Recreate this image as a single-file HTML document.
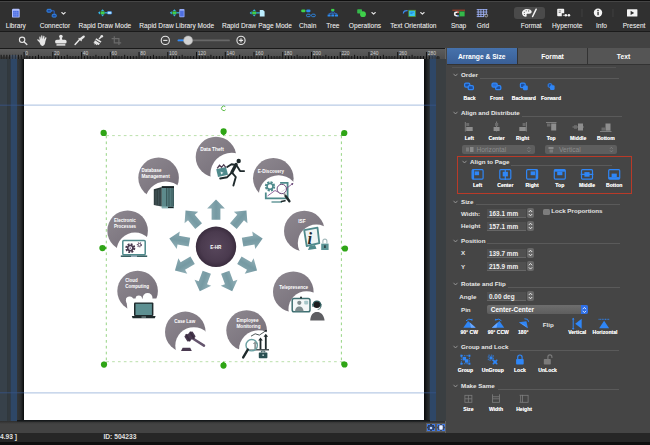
<!DOCTYPE html>
<html><head><meta charset="utf-8">
<style>
*{box-sizing:border-box;margin:0;padding:0}
html,body{width:650px;height:445px;overflow:hidden;background:#0e0e0e;font-family:"Liberation Sans",sans-serif;}
#root{position:relative;width:650px;height:445px;overflow:hidden;background:#0e0e0e}
.abs{position:absolute}
svg{position:absolute;left:0;top:0;overflow:visible}
.tl{position:absolute;top:21.600px;font-size:6.600px;color:#d6d6d6;text-shadow:0 0 .2px #aaa;white-space:nowrap;transform:translateX(-50%);line-height:8px;}
#tb1{left:0;top:1.300px;width:650px;height:29.700px;background:#303030;border-top:.8px solid #454545}
#tb2{left:0;top:31px;width:650px;height:18.200px;background:#424242;border-top:1px solid #1b1b1b;border-bottom:.8px solid #1a1a1a}
#ruler{left:0;top:49.200px;width:445px;height:9.800px;background:linear-gradient(#5c5c5c,#4c4c4c)}
#canvas{left:0;top:59px;width:446px;height:362px;background:#2b3236}
#page{left:24px;top:59px;width:400px;height:361px;background:#fff}
#panel{left:444.700px;top:48px;width:206px;height:384.700px;background:#454545;border-left:1.300px solid #646464}
#hbar{left:0;top:421px;width:445px;height:11.700px;background:linear-gradient(#2e2e2e,#434343 25%,#434343)}
#status{left:0;top:432.700px;width:650px;height:9.300px;background:#262626}
.sl{position:absolute;font-size:6.700px;color:#e0e0e0;font-weight:bold;white-space:nowrap;line-height:8px}
/* panel */
.tab{position:absolute;top:48px;height:16px;font-size:6.7px;font-weight:bold;color:#fff;text-align:center;line-height:17.400px;background:#555;border-right:1px solid #333}
.hd{position:absolute;font-size:6.2px;font-weight:bold;color:#e8e8e8;white-space:nowrap;line-height:8px}
.ln{position:absolute;height:1px;background:#5a5a5a}
.il{position:absolute;font-size:5.100px;font-weight:bold;color:#f2f2f2;text-shadow:0 0 .35px #e8e8e8;white-space:nowrap;transform:translateX(-50%);line-height:7px}
.lb{position:absolute;font-size:6.2px;font-weight:bold;color:#e6e6e6;white-space:nowrap;line-height:8px}
.inp{position:absolute;left:487px;width:39px;height:9px;background:#505050;border-bottom:1px solid #666;font-size:6.400px;font-weight:bold;color:#f0f0f0;line-height:9px;padding-left:2px;white-space:nowrap}
.stp{position:absolute;left:527px;width:7px;height:10px;background:#686868;border-radius:2px}
.chev{position:absolute;width:5px;height:4px}
</style></head><body>
<div id="root">
<div id="tb1" class="abs"></div>
<div id="tb2" class="abs"></div>
<div id="ruler" class="abs"></div>
<div id="canvas" class="abs"></div>
<div id="page" class="abs"></div>
<div id="panel" class="abs"></div>
<div id="hbar" class="abs"></div>
<div id="status" class="abs"></div>

<!--toolbar-->
<div class="abs" style="left:514px;top:7px;width:31px;height:12px;border-radius:3px;background:#4a4a4a"></div>
<div class="tl" style="left:15.8px">Library</div>
<div class="tl" style="left:54.9px">Connector</div>
<div class="tl" style="left:104.9px">Rapid Draw Mode</div>
<div class="tl" style="left:176.7px">Rapid Draw Library Mode</div>
<div class="tl" style="left:256.9px">Rapid Draw Page Mode</div>
<div class="tl" style="left:307.7px">Chain</div>
<div class="tl" style="left:332.9px">Tree</div>
<div class="tl" style="left:365px">Operations</div>
<div class="tl" style="left:413.4px">Text Orientation</div>
<div class="tl" style="left:458.6px">Snap</div>
<div class="tl" style="left:483px">Grid</div>
<div class="tl" style="left:531.2px">Format</div>
<div class="tl" style="left:567.3px">Hypernote</div>
<div class="tl" style="left:601.4px">Info</div>
<div class="tl" style="left:634.1px">Present</div>
<svg width="650" height="60" viewBox="0 0 650 60"><rect x="12" y="8.700" width="7.700" height="8.900" rx="1.200" fill="#b2c0ff"/><rect x="13.100" y="10.800" width="5.500" height="5.900" fill="#4468e2"/><path d="M13.100 12.800h5.500M13.100 14.800h5.500M14.900 10.800v5.900M16.700 10.800v5.900" stroke="#8aa0f4" stroke-width="0.5"/><path d="M51.300 10.800 H54.200 V14.200" fill="none" stroke="#2a62c8" stroke-width="1"/><rect x="47" y="9.300" width="4.200" height="2.900" rx="0.700" fill="#1a4aa0" stroke="#3a98ff" stroke-width="0.800"/><rect x="52.200" y="14.300" width="4" height="2.800" rx="0.700" fill="#1a4aa0" stroke="#3a98ff" stroke-width="0.800"/><path d="M61.8 12.5 L63.5 14.1 L65.2 12.5" fill="none" stroke="#e0e0e0" stroke-width="1.100" stroke-linecap="round" stroke-linejoin="round"/><path d="M98.0 12.8 L100.0 11.200000000000001 V14.4Z M102.6 9.200000000000001 L101.0 11.0 H104.19999999999999Z M102.6 16.400000000000002 L101.0 14.600000000000001 H104.19999999999999Z" fill="#35b6e8"/><rect x="100.6" y="11.4" width="4" height="2.8" fill="#3fd04a"/><path d="M104.6 12.8H107.5" stroke="#35b6e8" stroke-width="1.2"/><rect x="107.4" y="11.6" width="4.2" height="2.5" rx="0.6" fill="#bfe6ff" stroke="#2d8cf0" stroke-width="0.6"/><path d="M169.8 12.8 L171.8 11.200000000000001 V14.4Z M174.4 9.200000000000001 L172.8 11.0 H176.0Z M174.4 16.400000000000002 L172.8 14.600000000000001 H176.0Z" fill="#35b6e8"/><rect x="172.4" y="11.4" width="4" height="2.8" fill="#3fd04a"/><path d="M176.4 12.8H179.5" stroke="#35b6e8" stroke-width="1.2"/><rect x="179.3" y="8.9" width="5.2" height="8.3" rx="0.8" fill="#93a9f6"/><rect x="180.1" y="10.8" width="3.6" height="5.6" fill="#4f6fe0"/><path d="M249.6 12.9 L251.6 11.3 V14.5Z M254.2 9.3 L252.6 11.1 H255.79999999999998Z M254.2 16.5 L252.6 14.700000000000001 H255.79999999999998Z" fill="#35b6e8"/><rect x="252.2" y="11.5" width="4" height="2.8" fill="#3fd04a"/><path d="M256.2 12.9H259.8" stroke="#35b6e8" stroke-width="1.2"/><path d="M259.8 10h3.2l1.6 1.6v5h-4.8z" fill="#bdeeff"/><rect x="301.200" y="9.400" width="4.300" height="2.800" rx="1.200" fill="#3fd04a"/><rect x="306.200" y="9.400" width="4.300" height="2.800" rx="1.200" fill="#2d8cf0"/><rect x="306.500" y="14.200" width="3.800" height="2.500" rx="1.100" fill="none" stroke="#2d8cf0" stroke-width=".9"/><rect x="311.500" y="14.200" width="3.800" height="2.500" rx="1.100" fill="none" stroke="#2d8cf0" stroke-width=".9"/><path d="M332.8 11 L329 14.5 M332.8 11 L336.8 14.5 M332.8 11V14.5 M328.6 13.6H337.2" stroke="#2d6fd0" stroke-width="0.7" fill="none"/><rect x="331.2" y="8.9" width="3.1" height="2.3" fill="#3fd04a"/><rect x="327.6" y="14.4" width="3" height="2.2" rx="0.4" fill="#2d8cf0"/><rect x="331.3" y="14.4" width="3" height="2.2" rx="0.4" fill="#2d8cf0"/><rect x="335" y="14.4" width="3" height="2.2" rx="0.4" fill="#2d8cf0"/><rect x="357.200" y="9.300" width="4.800" height="4.200" rx="0.800" fill="#35b84a"/><circle cx="363" cy="14.200" r="2.900" fill="#3fd04a"/><path d="M371.90000000000003 12.5 L373.6 14.1 L375.3 12.5" fill="none" stroke="#e0e0e0" stroke-width="1.100" stroke-linecap="round" stroke-linejoin="round"/><path d="M403.4 13.6 C403.4 11.2 405 10.4 407.6 10.6" fill="none" stroke="#3a8af0" stroke-width="1.2"/><rect x="408.8" y="10.3" width="6.5" height="6.2" fill="#38c6f4" stroke="#5a9a2a" stroke-width="0.8"/><path d="M410.3 12.2h3.6M410.3 13.6h2.2" stroke="#1f6fd0" stroke-width="0.7"/><path d="M420.7 12.5 L422.4 14.1 L424.09999999999997 12.5" fill="none" stroke="#e0e0e0" stroke-width="1.100" stroke-linecap="round" stroke-linejoin="round"/><path d="M452.3 10.2H465" stroke="#d8482a" stroke-width="0.8"/><path d="M458.6 11.6h-2.4a2.4 2.4 0 0 0 0 4.8h2.4v-1.5h-2.2a0.9 0.9 0 0 1 0-1.8h2.2z" fill="#f4f4f4"/><rect x="457.4" y="11.6" width="1.3" height="1.5" fill="#e04a30"/><rect x="457.4" y="14.9" width="1.3" height="1.5" fill="#3a7ae0"/><rect x="459.6" y="11.6" width="5" height="4.6" fill="#35b84a" stroke="#2a8a3a" stroke-width="0.5"/><path d="M476.7 9.6H487.4M476.7 12H487.4M476.7 14.4H487.4M476.7 16.6H484M478.2 9.2V17M480.9 9.2V17M483.6 9.2V17M486.3 9.2V15" stroke="#9db0f6" stroke-width="0.9" fill="none"/><circle cx="486.2" cy="15.6" r="1.4" fill="#303030" stroke="#ddd" stroke-width="0.6"/><path d="M527 9c-2.800 0-5 1.900-5 4.100 0 2.100 1.700 3.700 3.700 3.700 1.100 0 1.200-.9 .9-1.500-.4-.8 .2-1.500 1.100-1.500h1.600c1.400 0 2.400-.9 2.400-2 0-1.700-2-2.800-4.700-2.800z" fill="#f4f4f4"/><circle cx="524.300" cy="12.300" r=".55" fill="#444"/><circle cx="526.200" cy="10.700" r=".55" fill="#444"/><circle cx="528.700" cy="10.900" r=".55" fill="#444"/><circle cx="524.400" cy="14.500" r=".55" fill="#444"/><path d="M536.200 9.200 L532.600 16.500" stroke="#f4f4f4" stroke-width="1.500" stroke-linecap="round"/><path d="M557.200 9.600a.8 .8 0 0 1 .8-.8h5.400a.8 .8 0 0 1 .8 .8v3.600h-2.400v3h-3.800a.8 .8 0 0 1-.8-.8z" fill="#f4f4f4"/><path d="M558.700 10.900h2.400M558.700 12.500h2" stroke="#555" stroke-width=".7"/><circle cx="565.800" cy="15.300" r="1.300" fill="#f4f4f4"/><circle cx="568.900" cy="15.300" r="1.300" fill="#f4f4f4"/><path d="M562.800 15.300h1.700" stroke="#f4f4f4" stroke-width=".7"/><path d="M582 9V17M613 9V17" stroke="#454545" stroke-width="0.8"/><circle cx="598" cy="12.8" r="4.2" fill="#f4f4f4"/><rect x="597.4" y="12" width="1.3" height="3.2" fill="#2b2b2b"/><circle cx="598" cy="10.6" r=".8" fill="#2b2b2b"/><rect x="627" y="9.2" width="10.4" height="7.4" rx="0.6" fill="#f4f4f4"/><path d="M630.6 10.8v4.2l3.6-2.100z" fill="#2b2b2b"/><circle cx="22.1" cy="39.8" r="2.7" fill="none" stroke="#e6e6e6" stroke-width="1.1"/><path d="M24.2 42 L26.9 44.4" stroke="#e6e6e6" stroke-width="1.4" stroke-linecap="round"/><path d="M39.6 42.6 L37.4 40.2 C36.9 39.5 37.7 38.8 38.4 39.4 L39.6 40.5 L39.3 37.1 C39.2 36.3 40.3 36.1 40.5 36.9 L41 39.3 L41.2 35.9 C41.2 35.1 42.4 35.1 42.4 35.9 L42.6 39.2 L43.3 36.3 C43.5 35.5 44.6 35.8 44.5 36.6 L44.1 39.6 L45.3 37.6 C45.7 36.9 46.7 37.4 46.4 38.2 L45.4 41.2 C45.2 43.8 44.4 45.9 42.4 45.9 C41 45.9 40.2 44.6 39.6 42.6Z" fill="#e6e6e6"/><circle cx="60.9" cy="36.5" r="1.8" fill="#e6e6e6"/><path d="M60 37.5h1.800l.5 2.400h-2.800z" fill="#e6e6e6"/><rect x="55.100" y="39.700" width="11.500" height="3.900" rx="1.700" fill="#e6e6e6"/><rect x="56.400" y="44.100" width="9" height="1.700" rx=".5" fill="#cfcfcf"/><path d="M75.100 44.500L79.800 39.300" stroke="#e6e6e6" stroke-width="1.500" stroke-linecap="round"/><path d="M79 38.400l2.300 2.300" stroke="#e6e6e6" stroke-width="1.200" stroke-linecap="round"/><path d="M80.800 39L83.700 36.600" stroke="#e6e6e6" stroke-width="2.300" stroke-linecap="round"/><circle cx="101.800" cy="36.300" r="1.300" fill="#e6e6e6"/><path d="M101.300 36.800L99 39" stroke="#e6e6e6" stroke-width="1.500"/><path d="M96.300 38.200l5.200 3.300-1 1.300-5.200-3.300z" fill="#e6e6e6"/><path d="M95 40.200l5 3.200c-1 1.300-1.500 1.800-2 1.700l-.4-1-.6 1.200-1-.5.200-1.200-1 1-1-.4.500-1.500-1.500.5c.6-.8 1.300-1.800 1.800-3z" fill="#e6e6e6"/><path d="M114.300 36.200V42.900H121.200M111.600 38.600H118.900V44.900" fill="none" stroke="#6a6a6a" stroke-width="1.200"/><circle cx="165.300" cy="40.400" r="4.100" fill="none" stroke="#e6e6e6" stroke-width="1.100"/><path d="M163.200 40.400h4.200" stroke="#e6e6e6" stroke-width="1.100"/><path d="M178.500 40.400H229" stroke="#686868" stroke-width="1.800" stroke-linecap="round"/><path d="M178.500 40.400H186" stroke="#2f8cff" stroke-width="1.800" stroke-linecap="round"/><circle cx="188.100" cy="40.400" r="4.500" fill="#d2d2d2"/><circle cx="188.100" cy="40.400" r="4.500" fill="none" stroke="#a8a8a8" stroke-width=".5"/><circle cx="241" cy="40.400" r="4.100" fill="none" stroke="#e6e6e6" stroke-width="1.100"/><path d="M238.900 40.400h4.200M241 38.300v4.200" stroke="#e6e6e6" stroke-width="1.100"/></svg>

<!--canvas-->
<svg width="650" height="445" viewBox="0 0 650 445"><defs>
<linearGradient id="dg" x1="0.1" y1="0" x2="0.9" y2="1"><stop offset="0" stop-color="#8d878f"/><stop offset="1" stop-color="#746d77"/></linearGradient>
<radialGradient id="cg" cx="0.5" cy="0.5" r="0.5"><stop offset="0" stop-color="#58475c"/><stop offset="0.75" stop-color="#4a3a4e"/><stop offset="1" stop-color="#3a2c3e"/></radialGradient>
<linearGradient id="ag" x1="0" y1="0" x2="1" y2="0"><stop offset="0" stop-color="#94b2b9"/><stop offset="0.5" stop-color="#769aa3"/><stop offset="1" stop-color="#8aaab2"/></linearGradient>
</defs><path d="M1.11 54.8V59M3.98 54.8V59M6.86 54.8V59M9.73 54.8V59M12.60 54.8V59M15.48 54.8V59M18.35 54.8V59M21.23 54.8V59M24.10 52V59M26.97 56V59M29.85 56V59M32.72 56V59M35.60 56V59M38.47 54.8V59M41.34 56V59M44.22 56V59M47.09 56V59M49.97 56V59M52.84 52V59M55.71 56V59M58.59 56V59M61.46 56V59M64.34 56V59M67.21 54.8V59M70.08 56V59M72.96 56V59M75.83 56V59M78.71 56V59M81.58 52V59M84.45 56V59M87.33 56V59M90.20 56V59M93.08 56V59M95.95 54.8V59M98.82 56V59M101.70 56V59M104.57 56V59M107.45 56V59M110.32 52V59M113.19 56V59M116.07 56V59M118.94 56V59M121.82 56V59M124.69 54.8V59M127.56 56V59M130.44 56V59M133.31 56V59M136.19 56V59M139.06 52V59M141.93 56V59M144.81 56V59M147.68 56V59M150.56 56V59M153.43 54.8V59M156.30 56V59M159.18 56V59M162.05 56V59M164.93 56V59M167.80 52V59M170.67 56V59M173.55 56V59M176.42 56V59M179.30 56V59M182.17 54.8V59M185.04 56V59M187.92 56V59M190.79 56V59M193.67 56V59M196.54 52V59M199.41 56V59M202.29 56V59M205.16 56V59M208.04 56V59M210.91 54.8V59M213.78 56V59M216.66 56V59M219.53 56V59M222.41 56V59M225.28 52V59M228.15 56V59M231.03 56V59M233.90 56V59M236.78 56V59M239.65 54.8V59M242.52 56V59M245.40 56V59M248.27 56V59M251.15 56V59M254.02 52V59M256.89 56V59M259.77 56V59M262.64 56V59M265.52 56V59M268.39 54.8V59M271.26 56V59M274.14 56V59M277.01 56V59M279.89 56V59M282.76 52V59M285.63 56V59M288.51 56V59M291.38 56V59M294.26 56V59M297.13 54.8V59M300.00 56V59M302.88 56V59M305.75 56V59M308.63 56V59M311.50 52V59M314.37 56V59M317.25 56V59M320.12 56V59M323.00 56V59M325.87 54.8V59M328.74 56V59M331.62 56V59M334.49 56V59M337.37 56V59M340.24 52V59M343.11 56V59M345.99 56V59M348.86 56V59M351.74 56V59M354.61 54.8V59M357.48 56V59M360.36 56V59M363.23 56V59M366.11 56V59M368.98 52V59M371.85 56V59M374.73 56V59M377.60 56V59M380.48 56V59M383.35 54.8V59M386.22 56V59M389.10 56V59M391.97 56V59M394.85 56V59M397.72 52V59M400.59 56V59M403.47 56V59M406.34 56V59M409.22 56V59M412.09 54.8V59M414.96 56V59M417.84 56V59M420.71 56V59M423.59 56V59M426.46 52V59M429.33 56V59M432.21 56V59M435.08 56V59M437.96 56V59" stroke="#101010" stroke-width="1"/><path d="M2.55 56.600V59M5.42 56.600V59M8.29 56.600V59M11.17 56.600V59M14.04 56.600V59M16.91 56.600V59M19.79 56.600V59M22.66 56.600V59M25.54 56.600V59M28.41 56.600V59M31.29 56.600V59M34.16 56.600V59M37.03 56.600V59M39.91 56.600V59M42.78 56.600V59M45.66 56.600V59M48.53 56.600V59M51.40 56.600V59M54.28 56.600V59M57.15 56.600V59M60.03 56.600V59M62.90 56.600V59M65.77 56.600V59M68.65 56.600V59M71.52 56.600V59M74.40 56.600V59M77.27 56.600V59M80.14 56.600V59M83.02 56.600V59M85.89 56.600V59M88.77 56.600V59M91.64 56.600V59M94.51 56.600V59M97.39 56.600V59M100.26 56.600V59M103.13 56.600V59M106.01 56.600V59M108.88 56.600V59M111.76 56.600V59M114.63 56.600V59M117.50 56.600V59M120.38 56.600V59M123.25 56.600V59M126.13 56.600V59M129.00 56.600V59M131.88 56.600V59M134.75 56.600V59M137.62 56.600V59M140.50 56.600V59M143.37 56.600V59M146.25 56.600V59M149.12 56.600V59M151.99 56.600V59M154.87 56.600V59M157.74 56.600V59M160.62 56.600V59M163.49 56.600V59M166.36 56.600V59M169.24 56.600V59M172.11 56.600V59M174.99 56.600V59M177.86 56.600V59M180.73 56.600V59M183.61 56.600V59M186.48 56.600V59M189.35 56.600V59M192.23 56.600V59M195.10 56.600V59M197.98 56.600V59M200.85 56.600V59M203.72 56.600V59M206.60 56.600V59M209.47 56.600V59M212.35 56.600V59M215.22 56.600V59M218.09 56.600V59M220.97 56.600V59M223.84 56.600V59M226.72 56.600V59M229.59 56.600V59M232.47 56.600V59M235.34 56.600V59M238.21 56.600V59M241.09 56.600V59M243.96 56.600V59M246.84 56.600V59M249.71 56.600V59M252.58 56.600V59M255.46 56.600V59M258.33 56.600V59M261.21 56.600V59M264.08 56.600V59M266.95 56.600V59M269.83 56.600V59M272.70 56.600V59M275.58 56.600V59M278.45 56.600V59M281.32 56.600V59M284.20 56.600V59M287.07 56.600V59M289.95 56.600V59M292.82 56.600V59M295.69 56.600V59M298.57 56.600V59M301.44 56.600V59M304.32 56.600V59M307.19 56.600V59M310.06 56.600V59M312.94 56.600V59M315.81 56.600V59M318.69 56.600V59M321.56 56.600V59M324.43 56.600V59M327.31 56.600V59M330.18 56.600V59M333.06 56.600V59M335.93 56.600V59M338.80 56.600V59M341.68 56.600V59M344.55 56.600V59M347.43 56.600V59M350.30 56.600V59M353.17 56.600V59M356.05 56.600V59M358.92 56.600V59M361.80 56.600V59M364.67 56.600V59M367.54 56.600V59M370.42 56.600V59M373.29 56.600V59M376.17 56.600V59M379.04 56.600V59M381.91 56.600V59M384.79 56.600V59M387.66 56.600V59M390.54 56.600V59M393.41 56.600V59M396.28 56.600V59M399.16 56.600V59M402.03 56.600V59M404.91 56.600V59M407.78 56.600V59M410.65 56.600V59M413.53 56.600V59M416.40 56.600V59M419.28 56.600V59M422.15 56.600V59M425.02 56.600V59M427.90 56.600V59M430.77 56.600V59M433.65 56.600V59M436.52 56.600V59M439.39 56.600V59" stroke="#101010" stroke-width=".7" opacity=".6"/><text x="25.3" y="55" font-size="4.900" fill="#cfcfcf" font-family="Liberation Sans">0</text><text x="54.0" y="55" font-size="4.900" fill="#cfcfcf" font-family="Liberation Sans">20</text><text x="82.8" y="55" font-size="4.900" fill="#cfcfcf" font-family="Liberation Sans">40</text><text x="111.5" y="55" font-size="4.900" fill="#cfcfcf" font-family="Liberation Sans">60</text><text x="140.3" y="55" font-size="4.900" fill="#cfcfcf" font-family="Liberation Sans">80</text><text x="169.0" y="55" font-size="4.900" fill="#cfcfcf" font-family="Liberation Sans">100</text><text x="197.7" y="55" font-size="4.900" fill="#cfcfcf" font-family="Liberation Sans">120</text><text x="226.5" y="55" font-size="4.900" fill="#cfcfcf" font-family="Liberation Sans">140</text><text x="255.2" y="55" font-size="4.900" fill="#cfcfcf" font-family="Liberation Sans">160</text><text x="284.0" y="55" font-size="4.900" fill="#cfcfcf" font-family="Liberation Sans">180</text><text x="312.7" y="55" font-size="4.900" fill="#cfcfcf" font-family="Liberation Sans">200</text><text x="341.4" y="55" font-size="4.900" fill="#cfcfcf" font-family="Liberation Sans">220</text><text x="370.2" y="55" font-size="4.900" fill="#cfcfcf" font-family="Liberation Sans">240</text><text x="398.9" y="55" font-size="4.900" fill="#cfcfcf" font-family="Liberation Sans">260</text><text x="427.7" y="55" font-size="4.900" fill="#cfcfcf" font-family="Liberation Sans">280</text><linearGradient id="sh1" x1="0" y1="0" x2="1" y2="0"><stop offset="0" stop-color="#34373a"/><stop offset=".55" stop-color="#2a2d2f"/><stop offset="1" stop-color="#08090a"/></linearGradient><linearGradient id="sh2" x1="1" y1="0" x2="0" y2="0"><stop offset="0" stop-color="#2c3032"/><stop offset=".5" stop-color="#1e2123"/><stop offset="1" stop-color="#08090a"/></linearGradient><rect x="0" y="59" width="7.4" height="362" fill="#37414a"/><rect x="7.4" y="59" width="3.2" height="362" fill="#32393e"/><rect x="10.6" y="59" width="6.5" height="362" fill="#2e4767"/><rect x="17.1" y="59" width="6.9" height="362" fill="url(#sh1)"/><rect x="424" y="59" width="6" height="362" fill="url(#sh2)"/><rect x="429.8" y="59" width="6.2" height="362" fill="#2e4767"/><rect x="436" y="59" width="10" height="362" fill="#3a3f42"/><rect x="10.6" y="55" width="6.5" height="4" fill="#3b5373" opacity=".5"/><rect x="429.8" y="55" width="6.2" height="4" fill="#3b5373" opacity=".5"/><path d="M0 105.2H24M424 105.2H436M0 392.8H24M424 392.8H436" stroke="#37568a" stroke-width="1" opacity=".75"/><path d="M24 105.2H424M24 392.8H424" stroke="#b9cbe6" stroke-width="1.200"/><rect x="17" y="420" width="413" height="1.5" fill="#15181a"/><path transform="translate(216 246.8) rotate(0)" d="M-4.4 -27V-38.3H-8.9L0 -47.4L8.9 -38.3H4.4V-27Z" fill="url(#ag)"/><path transform="translate(216 246.8) rotate(40)" d="M-4.4 -27V-38.3H-8.9L0 -47.4L8.9 -38.3H4.4V-27Z" fill="url(#ag)"/><path transform="translate(216 246.8) rotate(80)" d="M-4.4 -27V-38.3H-8.9L0 -47.4L8.9 -38.3H4.4V-27Z" fill="url(#ag)"/><path transform="translate(216 246.8) rotate(120)" d="M-4.4 -27V-38.3H-8.9L0 -47.4L8.9 -38.3H4.4V-27Z" fill="url(#ag)"/><path transform="translate(216 246.8) rotate(160)" d="M-4.4 -27V-38.3H-8.9L0 -47.4L8.9 -38.3H4.4V-27Z" fill="url(#ag)"/><path transform="translate(216 246.8) rotate(200)" d="M-4.4 -27V-38.3H-8.9L0 -47.4L8.9 -38.3H4.4V-27Z" fill="url(#ag)"/><path transform="translate(216 246.8) rotate(240)" d="M-4.4 -27V-38.3H-8.9L0 -47.4L8.9 -38.3H4.4V-27Z" fill="url(#ag)"/><path transform="translate(216 246.8) rotate(280)" d="M-4.4 -27V-38.3H-8.9L0 -47.4L8.9 -38.3H4.4V-27Z" fill="url(#ag)"/><path transform="translate(216 246.8) rotate(320)" d="M-4.4 -27V-38.3H-8.9L0 -47.4L8.9 -38.3H4.4V-27Z" fill="url(#ag)"/><circle cx="216" cy="246.8" r="20.2" fill="url(#cg)"/><text x="215.8" y="248.5" font-size="4.6" font-weight="bold" fill="#fff" text-anchor="middle" font-family="Liberation Sans">E-HR</text><mask id="m0" maskUnits="userSpaceOnUse" x="194" y="135" width="44" height="44"><rect x="194" y="135" width="44" height="44" fill="#fff"/><circle cx="231.6" cy="174" r="21.2" fill="#000"/></mask><circle cx="216" cy="157" r="20.3" fill="url(#dg)" mask="url(#m0)"/><text x="200.2" y="150.85" font-size="4.600" font-weight="bold" fill="#fff" textLength="23.6" lengthAdjust="spacingAndGlyphs" font-family="Liberation Sans">Data Theft</text><mask id="m1" maskUnits="userSpaceOnUse" x="251.3" y="156.3" width="44" height="44"><rect x="251.3" y="156.3" width="44" height="44" fill="#fff"/><circle cx="278.6" cy="195" r="19.8" fill="#000"/></mask><circle cx="273.3" cy="178.3" r="20.3" fill="url(#dg)" mask="url(#m1)"/><text x="257.8" y="172.55" font-size="4.600" font-weight="bold" fill="#fff" textLength="26.2" lengthAdjust="spacingAndGlyphs" font-family="Liberation Sans">E-Discovery</text><mask id="m2" maskUnits="userSpaceOnUse" x="282.3" y="209" width="44" height="44"><rect x="282.3" y="209" width="44" height="44" fill="#fff"/><circle cx="316.3" cy="243" r="18.5" fill="#000"/></mask><circle cx="304.3" cy="231" r="20.3" fill="url(#dg)" mask="url(#m2)"/><text x="298.2" y="222.55" font-size="4.600" font-weight="bold" fill="#fff" textLength="7.4" lengthAdjust="spacingAndGlyphs" font-family="Liberation Sans">ISF</text><mask id="m3" maskUnits="userSpaceOnUse" x="271.3" y="269.7" width="44" height="44"><rect x="271.3" y="269.7" width="44" height="44" fill="#fff"/><circle cx="306.5" cy="309.2" r="18" fill="#000"/></mask><circle cx="293.3" cy="291.7" r="20.3" fill="url(#dg)" mask="url(#m3)"/><text x="279.2" y="289.25" font-size="4.600" font-weight="bold" fill="#fff" textLength="28.9" lengthAdjust="spacingAndGlyphs" font-family="Liberation Sans">Telepresence</text><mask id="m4" maskUnits="userSpaceOnUse" x="224.6" y="308.6" width="44" height="44"><rect x="224.6" y="308.6" width="44" height="44" fill="#fff"/><circle cx="258.5" cy="349.8" r="19.5" fill="#000"/></mask><circle cx="246.6" cy="330.6" r="20.3" fill="url(#dg)" mask="url(#m4)"/><text x="236.4" y="321.84999999999997" font-size="4.600" font-weight="bold" fill="#fff" textLength="22.2" lengthAdjust="spacingAndGlyphs" font-family="Liberation Sans">Employee</text><text x="236.4" y="327.54999999999995" font-size="4.600" font-weight="bold" fill="#fff" textLength="24.1" lengthAdjust="spacingAndGlyphs" font-family="Liberation Sans">Monitoring</text><mask id="m5" maskUnits="userSpaceOnUse" x="163.3" y="309.9" width="44" height="44"><rect x="163.3" y="309.9" width="44" height="44" fill="#fff"/><circle cx="193.8" cy="345.7" r="18.5" fill="#000"/></mask><circle cx="185.3" cy="331.9" r="20.3" fill="url(#dg)" mask="url(#m5)"/><text x="174.2" y="323.34999999999997" font-size="4.600" font-weight="bold" fill="#fff" textLength="21" lengthAdjust="spacingAndGlyphs" font-family="Liberation Sans">Case Law</text><mask id="m6" maskUnits="userSpaceOnUse" x="115.6" y="269" width="44" height="44"><rect x="115.6" y="269" width="44" height="44" fill="#fff"/><circle cx="129.6" cy="300.2" r="3.7" fill="#000"/><circle cx="138.8" cy="298.6" r="3.2" fill="#000"/><circle cx="147.6" cy="298" r="4.9" fill="#000"/><path d="M126.200 298.400h33v18h-31z" fill="#000"/></mask><circle cx="137.6" cy="291" r="20.3" fill="url(#dg)" mask="url(#m6)"/><text x="125.2" y="281.84999999999997" font-size="4.600" font-weight="bold" fill="#fff" textLength="12.4" lengthAdjust="spacingAndGlyphs" font-family="Liberation Sans">Cloud</text><text x="125.2" y="287.95" font-size="4.600" font-weight="bold" fill="#fff" textLength="23.9" lengthAdjust="spacingAndGlyphs" font-family="Liberation Sans">Computing</text><mask id="m7" maskUnits="userSpaceOnUse" x="105.6" y="208.7" width="44" height="44"><rect x="105.6" y="208.7" width="44" height="44" fill="#fff"/><circle cx="135" cy="251" r="18.5" fill="#000"/></mask><circle cx="127.6" cy="230.7" r="20.3" fill="url(#dg)" mask="url(#m7)"/><text x="113.9" y="222.15" font-size="4.600" font-weight="bold" fill="#fff" textLength="21.8" lengthAdjust="spacingAndGlyphs" font-family="Liberation Sans">Electronic</text><text x="113.9" y="227.95000000000002" font-size="4.600" font-weight="bold" fill="#fff" textLength="22.2" lengthAdjust="spacingAndGlyphs" font-family="Liberation Sans">Processes</text><mask id="m8" maskUnits="userSpaceOnUse" x="136.6" y="155.8" width="44" height="44"><rect x="136.6" y="155.8" width="44" height="44" fill="#fff"/><circle cx="165.7" cy="202" r="20.6" fill="#000"/></mask><circle cx="158.6" cy="177.8" r="20.3" fill="url(#dg)" mask="url(#m8)"/><text x="141.4" y="172.05" font-size="4.600" font-weight="bold" fill="#fff" textLength="20" lengthAdjust="spacingAndGlyphs" font-family="Liberation Sans">Database</text><text x="141.4" y="178.35" font-size="4.600" font-weight="bold" fill="#fff" textLength="28.3" lengthAdjust="spacingAndGlyphs" font-family="Liberation Sans">Management</text><path d="M216.200 169.200l9.800-2.200 2 7.800-10 2.200z" fill="#4f8a8c"/><path d="M217.200 168.300l2.300-3 2 2 2.200-2.600 2 2.600" fill="none" stroke="#4a3a50" stroke-width="1.300"/><path d="M220.500 171.500l3 1.300-2.400 1.700z" fill="#e6f0f0"/><circle cx="238.700" cy="161" r="2.200" fill="#1f2a2c"/><path d="M236.200 164.300L231.900 172.300" stroke="#1f2a2c" stroke-width="3.200" stroke-linecap="round"/><path d="M236 165l-4.500-.8-4.300 2.800M236.800 165.800l3.300 5.200 4 .1M232 172.600l3.800 4.400-2.400 8.600M231.500 172.800l-4.300 4.400-7 1.300" fill="none" stroke="#1f2a2c" stroke-width="1.900" stroke-linecap="round" stroke-linejoin="round"/><path d="M265.800 192.500v5.800h21.800v-15.500h-7.500" fill="none" stroke="#4f8a8c" stroke-width="1.800"/><path d="M271.500 202h10.500" stroke="#4f8a8c" stroke-width="1.300"/><circle cx="270" cy="186.400" r="3.900" fill="none" stroke="#4f8a8c" stroke-width="2.600" stroke-dasharray="2 1.060"/><circle cx="270" cy="186.400" r="2.900" fill="none" stroke="#4f8a8c" stroke-width="1.500"/><path d="M267.500 196l7.500-5.500 5 2.500 12.500-9.200" fill="none" stroke="#7a4a8a" stroke-width=".8"/><path d="M293.400 183l-2.400.4 1.600 1.800z" fill="#5a3a6a"/><circle cx="281.800" cy="189" r="4.700" fill="#fff" fill-opacity=".75" stroke="#6a4a7a" stroke-width="1"/><path d="M284.200 193.500l1.600 3" stroke="#8a8a8a" stroke-width="2" /><path d="M285.800 196.300l3.600 5" stroke="#1f2a2c" stroke-width="2.400" stroke-linecap="round"/><path d="M281.500 201.500l3.500-.8" stroke="#1f2a2c" stroke-width="1.600" stroke-linecap="round"/><path d="M304.200 230.200l13.300-2.600 1.800 15.600-12.600 2.800z" fill="#eef4f4" stroke="#4f8a8c" stroke-width="1.800" stroke-linejoin="round"/><path d="M309.500 246.300l5.500-1.200 1.500 3.600-8.500 1.400z" fill="#4f8a8c"/><text x="307.600" y="243.600" font-size="16.500" font-style="italic" font-weight="bold" fill="#1f2a2c" font-family="Liberation Serif">i</text><rect x="321.200" y="243.600" width="7.400" height="6.400" fill="#5d9496"/><path d="M322.900 243.600v-2.500a2 2 0 0 1 4 0v2.500" fill="none" stroke="#a4babc" stroke-width="1.100"/><rect x="324.300" y="245.300" width="1.300" height="2.700" fill="#1f2a2c"/><rect x="292.200" y="298.600" width="17.800" height="13.200" rx="1.800" fill="#f4f8f8" stroke="#3f7072" stroke-width="1.500"/><circle cx="299.300" cy="302.800" r="2.100" fill="#7e8c8e"/><path d="M295 311.200c.5-3.600 2.200-4.800 4.300-4.800s3.800 1.200 4.300 4.800z" fill="#7e8c8e"/><rect x="304.200" y="300.800" width="4" height="3.600" rx=".8" fill="#a8c8ca"/><circle cx="301" cy="297.500" r="1" fill="#1f2a2c"/><circle cx="316.900" cy="304.600" r="3.500" fill="#1c1c1e"/><path d="M313 305a3.900 3.900 0 0 1 7.800 0" fill="none" stroke="#2f5a5c" stroke-width="1.200"/><rect x="312.300" y="304" width="1.600" height="2.800" rx=".6" fill="#2f5a5c"/><rect x="319.900" y="304" width="1.600" height="2.800" rx=".6" fill="#2f5a5c"/><path d="M320.700 306.800c0 2-1.500 2.600-3 2.600" fill="none" stroke="#2f5a5c" stroke-width=".8"/><path d="M310.200 320.500c.4-6 3-8.600 6.800-8.600s6.800 2.600 7.600 8.600z" fill="#5e5e62"/><path d="M254.300 349.200v-5.200h-1.400l2.300-3 2.300 3h-1.400v5.200zM259.600 349.200v-8.800h-1.400l2.300-3 2.300 3h-1.400v8.800zM264.900 349.200v-12.400h-1.400l2.300-3 2.300 3h-1.400v12.400z" fill="#1f2a2c"/><path d="M248.500 349.800h20.500" stroke="#1f2a2c" stroke-width="1.200"/><path d="M251 336.200l4.200-2.400 4.200 1.300 6.800-4.600" fill="none" stroke="#1f2a2c" stroke-width=".8"/><path d="M267 330l-2.400.3 1.500 1.900z" fill="#1f2a2c"/><circle cx="251.700" cy="345.200" r="5.700" fill="#fff" fill-opacity=".5" stroke="#6aa0a2" stroke-width="1.400"/><path d="M247.800 349.600l-4.600 7.800" stroke="#1f2a2c" stroke-width="2.400" stroke-linecap="round"/><rect x="258.800" y="352.400" width="8.600" height="5.800" rx=".7" fill="#2a5052"/><path d="M261.400 352.400v-1.300h3.400v1.300" fill="none" stroke="#2a5052" stroke-width=".9"/><rect x="262.400" y="354.500" width="1.500" height="1.400" fill="#cfe0e0"/><path d="M192 338l12 7.600" stroke="#65556e" stroke-width="2.500" stroke-linecap="round"/><g transform="rotate(-32 190 336.500)"><rect x="185.200" y="333.200" width="9.600" height="6.600" rx=".8" fill="#4a3a50"/><rect x="186.800" y="332.400" width="1.600" height="8.200" fill="#3a2c40"/><rect x="191.600" y="332.400" width="1.600" height="8.200" fill="#3a2c40"/></g><path d="M181 351l1.600-3.300h7.600l1.600 3.300z" fill="#4a3a50"/><rect x="134" y="302.400" width="19.400" height="13.600" rx="1" fill="#1f2a2c"/><rect x="135.500" y="303.800" width="16.400" height="11.200" fill="#5e9092"/><path d="M131.800 316h23.800l-.8 2.300h-22.200z" fill="#1f2a2c"/><rect x="141.500" y="316.600" width="4.500" height=".9" fill="#9ab0b2"/><rect x="122.800" y="240.400" width="22.400" height="14.400" rx="1" fill="#fff" stroke="#4f8a8c" stroke-width="1.500"/><path d="M120.800 256.200h26.400" stroke="#2f5a5c" stroke-width="1.500"/><rect x="131" y="255.700" width="6" height="1" fill="#bcd"/><circle cx="130.300" cy="248.100" r="3.700" fill="none" stroke="#4a3a50" stroke-width="2.600" stroke-dasharray="1.700 1.200"/><circle cx="130.300" cy="248.100" r="2.600" fill="none" stroke="#4a3a50" stroke-width="1.600"/><circle cx="130.300" cy="248.100" r=".9" fill="#8a6a9a"/><circle cx="139.400" cy="244.800" r="1.900" fill="none" stroke="#6a5a72" stroke-width="1.500" stroke-dasharray="1 .7"/><circle cx="139.400" cy="244.800" r="1.300" fill="none" stroke="#6a5a72" stroke-width=".8"/><path d="M153.800 189.200l8-2.200v19.500l-8-1.500z" fill="#2a3638"/><path d="M155.200 190.500v14.500M156.800 190v15.500M158.400 189.600v16.200M160 189.200v17" stroke="#566c6e" stroke-width=".6"/><rect x="161.800" y="186.200" width="12.200" height="22" fill="#5d8a8c"/><rect x="161.800" y="186.200" width="12.200" height="1.800" fill="#1a2224"/><rect x="166" y="188" width="8" height="18.500" fill="#3c5c5e"/><path d="M167.500 188v18.500M169 188v18.500M170.500 188v18.500M172 188v18.500" stroke="#6a9a9c" stroke-width=".5"/><rect x="161.800" y="206.500" width="12.200" height="1.700" fill="#86b0b2"/><rect x="168" y="206.700" width="5.500" height="1.300" fill="#1a2224"/><path d="M106.300 135.600H341.400M106.300 361.700H341.400" fill="none" stroke="#b2dda1" stroke-width=".9" stroke-dasharray="2.700 3.140"/><path d="M106.300 135.600V361.700M341.400 135.600V361.700" fill="none" stroke="#8acf76" stroke-width=".9" stroke-dasharray="2.700 3.140"/><circle cx="103.6" cy="132.9" r="3.1" fill="#2fa516"/><path d="M102.94 135.93L106.3 135.6L106.63 132.24Z" fill="#2fa516"/><circle cx="223.6" cy="131.4" r="3.1" fill="#2fa516"/><path d="M220.99 133.07L223.6 135.8L226.21 133.07Z" fill="#2fa516"/><circle cx="344.3" cy="133" r="3.1" fill="#2fa516"/><path d="M341.31 132.19L341.2 135.8L344.81 136.06Z" fill="#2fa516"/><circle cx="102.4" cy="248.1" r="3.1" fill="#2fa516"/><path d="M104.07 250.71L106.5 248.1L104.07 245.49Z" fill="#2fa516"/><circle cx="345" cy="248.5" r="3.1" fill="#2fa516"/><path d="M343.33 245.89L341.2 248.5L343.33 251.11Z" fill="#2fa516"/><circle cx="104" cy="364.6" r="3.1" fill="#2fa516"/><path d="M107.07 365.02L106.3 361.9L103.10 361.63Z" fill="#2fa516"/><circle cx="223.5" cy="365.6" r="3.1" fill="#2fa516"/><path d="M226.11 363.93L223.5 361.5L220.89 363.93Z" fill="#2fa516"/><circle cx="344.5" cy="364.5" r="3.1" fill="#2fa516"/><path d="M345.01 361.44L341.4 361.7L341.51 365.31Z" fill="#2fa516"/><path d="M225.300 106.600a2.300 2.300 0 1 0 .4 3" fill="none" stroke="#4db535" stroke-width=".9"/></svg>
<div class="sl" style="left:0;top:433.200px">4.93 ]</div>
<div class="sl" style="left:103.400px;top:433.200px">ID: 504233</div>
<div class="abs" style="left:426px;top:423.300px;width:19px;height:8.600px;background:#5c5c5c"></div>
<div class="abs" style="left:427px;top:424px;width:8px;height:7.400px;background:#2e3a54;border:1px dashed #3f7ae8"></div><div class="abs" style="left:429.800px;top:426.500px;width:2.400px;height:2.400px;border-radius:2px;background:#f4f7ff;box-shadow:0 0 1.800px 0.600px #4a88ff"></div>
<div class="abs" style="left:437px;top:424px;width:7.600px;height:7.400px;background:#3a4866;border:1px dashed #3f7ae8"></div><div class="abs" style="left:438.600px;top:425.100px;width:4.400px;height:5.400px;background:#f2f5ff;border-radius:1.200px;border:.6px solid #b8c6e8"></div>

<!--panel-->
<div class="tab" style="left:446.500px;width:71.500px;background:linear-gradient(#4672ac,#3a5f96)">Arrange &amp; Size</div>
<div class="tab" style="left:518px;width:70px">Format</div>
<div class="tab" style="left:588px;width:71px;border-right:none">Text</div>
<div class="ln" style="left:447px;top:64px;width:203px;background:#333"></div>
<div class="ln" style="left:452px;top:67px;width:164px;background:#535353"></div>
<svg class="chev" style="left:453px;top:73.3px" viewBox="0 0 5 4"><path d="M.5 .8L2.500 3L4.500 .8" fill="none" stroke="#b0b0b0" stroke-width=".7"/></svg><div class="hd" style="left:461px;top:71.2px">Order</div><div class="ln" style="left:480px;top:77.8px;width:139px"></div>
<div class="il" style="left:469.6px;top:94.8px">Back</div><div class="il" style="left:496.6px;top:94.8px">Front</div><div class="il" style="left:523.8px;top:94.8px">Backward</div><div class="il" style="left:551px;top:94.8px">Forward</div>
<svg class="chev" style="left:453px;top:111.4px" viewBox="0 0 5 4"><path d="M.5 .8L2.500 3L4.500 .8" fill="none" stroke="#b0b0b0" stroke-width=".7"/></svg><div class="hd" style="left:461px;top:109.30000000000001px">Align and Distribute</div><div class="ln" style="left:522px;top:115.9px;width:100px"></div>
<div class="il" style="left:469.3px;top:134.8px">Left</div><div class="il" style="left:496.6px;top:134.8px">Center</div><div class="il" style="left:522.6px;top:134.8px">Right</div><div class="il" style="left:551.2px;top:134.8px">Top</div><div class="il" style="left:578.2px;top:134.8px">Middle</div><div class="il" style="left:605.8px;top:134.8px">Bottom</div>
<div class="abs" style="left:462px;top:145px;width:72.500px;height:9px;border-radius:2px;background:#5e5e5e;font-size:6.600px;color:#8c8c8c;line-height:9px;padding-left:14.500px">Horizontal</div>
<div class="abs" style="left:544.5px;top:145px;width:72.500px;height:9px;border-radius:2px;background:#5e5e5e;font-size:6.600px;color:#8c8c8c;line-height:9px;padding-left:14.500px">Vertical</div>
<div class="abs" style="left:457.400px;top:155.700px;width:174.600px;height:38.500px;border:1.200px solid #b93a28"></div>
<svg class="chev" style="left:462px;top:160.3px" viewBox="0 0 5 4"><path d="M.5 .8L2.500 3L4.500 .8" fill="none" stroke="#b0b0b0" stroke-width=".7"/></svg><div class="hd" style="left:470px;top:158.20000000000002px">Align to Page</div><div class="ln" style="left:511px;top:164.8px;width:101px"></div>
<div class="il" style="left:477.6px;top:181.7px">Left</div><div class="il" style="left:505.3px;top:181.7px">Center</div><div class="il" style="left:532.1px;top:181.7px">Right</div><div class="il" style="left:559.8px;top:181.7px">Top</div><div class="il" style="left:587px;top:181.7px">Middle</div><div class="il" style="left:614.2px;top:181.7px">Botton</div>
<svg class="chev" style="left:453px;top:199.8px" viewBox="0 0 5 4"><path d="M.5 .8L2.500 3L4.500 .8" fill="none" stroke="#b0b0b0" stroke-width=".7"/></svg><div class="hd" style="left:461px;top:197.70000000000002px">Size</div><div class="ln" style="left:475.5px;top:204.3px;width:144.5px"></div>
<div class="lb" style="left:461px;top:209.600px">Width:</div><div class="inp" style="top:209px">163.1 mm</div><div class="stp" style="top:208px"></div>
<div class="lb" style="left:461px;top:222.400px">Height</div><div class="inp" style="top:222px">157.1 mm</div><div class="stp" style="top:221px"></div>
<div class="abs" style="left:543px;top:208.500px;width:6.500px;height:6.500px;border-radius:1.500px;background:#7c7c7c"></div><div class="lb" style="left:551.200px;top:207.400px">Lock Proportions</div>
<svg class="chev" style="left:453px;top:238.6px" viewBox="0 0 5 4"><path d="M.5 .8L2.500 3L4.500 .8" fill="none" stroke="#b0b0b0" stroke-width=".7"/></svg><div class="hd" style="left:461px;top:236.5px">Position</div><div class="ln" style="left:486.5px;top:243.1px;width:133.5px"></div>
<div class="lb" style="left:461px;top:249.400px">X</div><div class="inp" style="top:249px">139.7 mm</div><div class="stp" style="top:248px"></div>
<div class="lb" style="left:461px;top:262.500px">Y</div><div class="inp" style="top:262.300px">215.9 mm</div><div class="stp" style="top:261.300px"></div>
<svg class="chev" style="left:453px;top:282.4px" viewBox="0 0 5 4"><path d="M.5 .8L2.500 3L4.500 .8" fill="none" stroke="#b0b0b0" stroke-width=".7"/></svg><div class="hd" style="left:461px;top:280.29999999999995px">Rotate and Flip</div><div class="ln" style="left:507.5px;top:286.9px;width:112.5px"></div>
<div class="lb" style="left:459.200px;top:292.500px">Angle</div><div class="inp" style="top:292px">0.00 deg</div><div class="stp" style="top:291px"></div>
<div class="lb" style="left:461px;top:305.600px">Pin</div>
<div class="abs" style="left:487.200px;top:305.400px;width:101px;height:9px;border-radius:2px;background:linear-gradient(#6e6e6e,#5e5e5e);font-size:6.500px;font-weight:bold;color:#fff;line-height:9px;padding-left:3.500px">Center-Center</div>
<div class="abs" style="left:580.700px;top:305.400px;width:7.500px;height:9px;border-radius:0 2px 2px 0;background:#2f6fe6"></div>
<div class="il" style="left:469.2px;top:329.2px">90° CW</div><div class="il" style="left:498.3px;top:329.2px">90° CCW</div><div class="il" style="left:523.3px;top:329.2px">180°</div><div class="il" style="left:577.2px;top:329.2px">Vertical</div><div class="il" style="left:605px;top:329.2px">Horizontal</div>
<div class="lb" style="left:542.800px;top:320.800px">Flip</div>
<svg class="chev" style="left:453px;top:345.3px" viewBox="0 0 5 4"><path d="M.5 .8L2.500 3L4.500 .8" fill="none" stroke="#b0b0b0" stroke-width=".7"/></svg><div class="hd" style="left:461px;top:343.2px">Group and Lock</div><div class="ln" style="left:510px;top:349.8px;width:109px"></div>
<div class="il" style="left:465.4px;top:367.2px">Group</div><div class="il" style="left:492.8px;top:367.2px">UnGroup</div><div class="il" style="left:519.9px;top:367.2px">Lock</div><div class="il" style="left:547.6px;top:367.2px">UnLock</div>
<svg class="chev" style="left:453px;top:384px" viewBox="0 0 5 4"><path d="M.5 .8L2.500 3L4.500 .8" fill="none" stroke="#b0b0b0" stroke-width=".7"/></svg><div class="hd" style="left:461px;top:381.9px">Make Same</div><div class="ln" style="left:498px;top:388.5px;width:121px"></div>
<div class="il" style="left:468.4px;top:405.5px">Size</div><div class="il" style="left:496px;top:405.5px">Width</div><div class="il" style="left:524.1px;top:405.5px">Height</div>
<svg width="650" height="445" viewBox="0 0 650 445"><path d="M528.800 212l1.700-1.800 1.700 1.800M528.800 214l1.700 1.800 1.700-1.800" fill="none" stroke="#fff" stroke-width=".8"/><path d="M528.800 225l1.700-1.800 1.700 1.800M528.800 227l1.700 1.800 1.700-1.800" fill="none" stroke="#fff" stroke-width=".8"/><path d="M528.800 252l1.700-1.800 1.700 1.800M528.800 254l1.700 1.800 1.700-1.800" fill="none" stroke="#fff" stroke-width=".8"/><path d="M528.800 265.3l1.700-1.800 1.700 1.800M528.800 267.3l1.700 1.800 1.700-1.800" fill="none" stroke="#fff" stroke-width=".8"/><path d="M528.800 295l1.700-1.800 1.700 1.800M528.800 297l1.700 1.800 1.700-1.800" fill="none" stroke="#fff" stroke-width=".8"/><path d="M582.700 309.200l1.700-1.800 1.700 1.800M582.700 310.800l1.700 1.800 1.700-1.800" fill="none" stroke="#fff" stroke-width=".8"/><path d="M527.5 148.800l1.400-1.500 1.400 1.500M527.5 150.400l1.400 1.500 1.400-1.500" fill="none" stroke="#8a8a8a" stroke-width=".7"/><path d="M610 148.800l1.400-1.500 1.400 1.500M610 150.400l1.400 1.500 1.400-1.500" fill="none" stroke="#8a8a8a" stroke-width=".7"/><rect x="466" y="147.500" width="3" height="4" fill="#7a7a7a"/><rect x="470" y="147" width="3.500" height="5" fill="#8a8a8a"/><rect x="548.500" y="147" width="5" height="2" fill="#8a8a8a"/><rect x="549.500" y="149.500" width="3.500" height="3" fill="#7a7a7a"/><rect x="464.6" y="83.1" width="5.200" height="4" rx="1.300" fill="#1f4f9c" stroke="#2f86f6" stroke-width="1.300"/><rect x="468.2" y="85.7" width="5.200" height="4" rx="1.300" fill="#1f4f9c" stroke="#2f86f6" stroke-width="1.300"/><rect x="495.59999999999997" y="85.7" width="5.200" height="4" rx="1.300" fill="#1f4f9c" stroke="#2f86f6" stroke-width="1.300"/><rect x="492.0" y="83.1" width="5.200" height="4" rx="1.300" fill="#2a6fd6" stroke="#2f86f6" stroke-width="1.300"/><rect x="520.4" y="83.1" width="4.800" height="4.600" rx="1.200" fill="#1f4f9c" stroke="#2f86f6" stroke-width="1.200"/><rect x="523.0" y="85.5" width="4.800" height="4.800" rx="1.200" fill="#2f86f6"/><rect x="548.2" y="83.7" width="3.600" height="3.600" rx="1" fill="#1f4f9c" stroke="#2f86f6" stroke-width="1"/><rect x="550.0" y="85.3" width="4.600" height="4.600" rx="1.200" fill="#2f86f6"/><path d="M465.300 122V131.5" stroke="#8e8e8e" stroke-width=".8"/><rect x="466.200" y="123" width="3" height="3" fill="#6a6a6a"/><rect x="466.200" y="127" width="6.500" height="4" fill="#8e8e8e"/><path d="M496.600 121.5V131.5" stroke="#8e8e8e" stroke-width=".8"/><rect x="495" y="123" width="3.200" height="3" fill="#6a6a6a"/><rect x="493.600" y="127" width="6" height="4" fill="#8e8e8e"/><path d="M526.400 122V131.5" stroke="#8e8e8e" stroke-width=".8"/><rect x="522.600" y="123" width="3" height="3" fill="#6a6a6a"/><rect x="519.300" y="127" width="6.500" height="4" fill="#8e8e8e"/><path d="M546 122.5H556.500" stroke="#8e8e8e" stroke-width=".8"/><rect x="547" y="123.5" width="3.500" height="3" fill="#6a6a6a"/><rect x="551.200" y="123.5" width="5" height="7" fill="#8e8e8e"/><path d="M572.500 127H584" stroke="#8e8e8e" stroke-width=".8"/><rect x="574" y="125.2" width="3" height="3.600" fill="#6a6a6a"/><rect x="578" y="123.5" width="5" height="7" fill="#8e8e8e"/><path d="M600 131.5H611.500" stroke="#8e8e8e" stroke-width=".8"/><rect x="601.500" y="127.5" width="3.500" height="3.200" fill="#6a6a6a"/><rect x="605.500" y="123.5" width="5" height="7.200" fill="#8e8e8e"/><rect x="472.1" y="169.70000000000002" width="11.0" height="9.4" rx="1" fill="none" stroke="#2f86f6" stroke-width="1.200"/><rect x="472.1" y="169.70000000000002" width="2" height="9.4" fill="#2f86f6"/><rect x="474.6" y="171.4" width="4.500" height="3.800" fill="#2f86f6"/><rect x="499.8" y="169.70000000000002" width="11.0" height="9.4" rx="1" fill="none" stroke="#2f86f6" stroke-width="1.200"/><path d="M505.3 168.9V179.9" stroke="#2f86f6" stroke-width="1.300"/><rect x="502.7" y="171.8" width="5.200" height="4.600" fill="#2f86f6"/><rect x="526.6" y="169.70000000000002" width="11.0" height="9.4" rx="1" fill="none" stroke="#2f86f6" stroke-width="1.200"/><rect x="535.6" y="169.70000000000002" width="2" height="9.4" fill="#2f86f6"/><rect x="530.6" y="171.4" width="4.500" height="3.800" fill="#2f86f6"/><rect x="554.3" y="169.70000000000002" width="11.0" height="9.4" rx="1" fill="none" stroke="#2f86f6" stroke-width="1.200"/><rect x="554.3" y="169.70000000000002" width="11.0" height="2" fill="#2f86f6"/><rect x="557.1999999999999" y="171.6" width="5.200" height="3.600" fill="#2f86f6"/><rect x="581.5" y="169.70000000000002" width="11.0" height="9.4" rx="1" fill="none" stroke="#2f86f6" stroke-width="1.200"/><path d="M580.7 174.4H593.3" stroke="#2f86f6" stroke-width="1.300"/><rect x="584.4" y="172.1" width="5.200" height="4.600" fill="#2f86f6"/><rect x="608.7" y="169.70000000000002" width="11.0" height="9.4" rx="1" fill="none" stroke="#2f86f6" stroke-width="1.200"/><rect x="608.7" y="177.1" width="11.0" height="2" fill="#2f86f6"/><rect x="611.6" y="173.6" width="5.200" height="3.600" fill="#2f86f6"/><path d="M463.3 327.8L468.0 321.0L475.7 327.8Z" fill="#2f86f6"/><path d="M471.0 327.8L469.8 322.6L475.7 327.8Z" fill="#6aa8ff"/><path d="M466.0 320.8Q468.5 318.0 472.0 319.8" fill="none" stroke="#2f86f6" stroke-width="1"/><path d="M472.8 320.5l-2-.2 1.300-1.700z" fill="#2f86f6"/><path d="M491.8 327.8L499.5 321.0L504.2 327.8Z" fill="#2f86f6"/><path d="M491.8 327.8L497.7 322.6L496.5 327.8Z" fill="#6aa8ff"/><path d="M501.5 320.8Q499 318.0 495.5 319.8" fill="none" stroke="#2f86f6" stroke-width="1"/><path d="M494.7 320.5l2-.2-1.300-1.700z" fill="#2f86f6"/><path d="M518.9 322.3L526.4 321.3L527.9 328.3Z" fill="#2f86f6"/><path d="M518.9 322.3L524.4 324.8L527.9 328.3Z" fill="#6aa8ff" opacity=".7"/><path d="M524.4 318.8Q528.4 318.3 528.6999999999999 321.8" fill="none" stroke="#2f86f6" stroke-width="1"/><path d="M573.2 318.3V329.3" stroke="#2f86f6" stroke-width="1"/><path d="M573.2 317.8l-1.300 1.800h2.600zM573.2 329.8l-1.300-1.800h2.600z" fill="#2f86f6"/><path d="M581.7 318.8V328.8L575.2 323.8Z" fill="#2f86f6"/><path d="M598.6 319.3H609.6" stroke="#2f86f6" stroke-width="1" stroke-dasharray="1 .6"/><path d="M599.1 328.3H609.1L604.1 320.8Z" fill="#2f86f6"/><rect x="461.4" y="355.7" width="8" height="8" fill="none" stroke="#2f86f6" stroke-width=".8" stroke-dasharray="1.500 1"/><rect x="462.59999999999997" y="356.9" width="3.500" height="3.500" fill="#2f86f6"/><rect x="464.9" y="359.2" width="3.500" height="3.500" fill="#2f86f6"/><rect x="460.4" y="354.7" width="2" height="2" fill="#2f86f6"/><rect x="460.4" y="362.7" width="2" height="2" fill="#2f86f6"/><rect x="468.4" y="354.7" width="2" height="2" fill="#2f86f6"/><rect x="468.4" y="362.7" width="2" height="2" fill="#2f86f6"/><rect x="488.3" y="355.2" width="5" height="5" fill="none" stroke="#2f86f6" stroke-width=".8" stroke-dasharray="1.500 1"/><rect x="489.5" y="356.4" width="3" height="3" fill="#2f86f6"/><path d="M492.8 359.7l4.500 4.500M497.3 359.7l-4.500 4.500" stroke="#2f86f6" stroke-width="1.300"/><rect x="493.3" y="360.2" width="3.500" height="3.500" fill="#2f86f6" opacity=".7"/><path d="M517.6999999999999 359.2V357.2a2.200 2.200 0 0 1 4.400 0V359.2" fill="none" stroke="#2f86f6" stroke-width="1.200"/><rect x="516.1" y="358.9" width="7.600" height="5.600" rx=".8" fill="#2f86f6"/><path d="M547.9 359.2V356.9a2 2 0 0 1 4 0V357.9" fill="none" stroke="#7c7c7c" stroke-width="1.100"/><rect x="543.8000000000001" y="358.9" width="7" height="5.600" rx=".8" fill="#7c7c7c"/><rect x="464.9" y="395.3" width="7" height="7" fill="none" stroke="#7e7e7e" stroke-width=".8"/><path d="M468.4 395.3V402.3M464.9 398.8H471.9" stroke="#7e7e7e" stroke-width=".8"/><rect x="492.5" y="396.8" width="7" height="5.500" fill="none" stroke="#7e7e7e" stroke-width=".8"/><path d="M492.5 394.3V396.8M499.5 394.3V396.8M492.5 398.8H499.5" stroke="#7e7e7e" stroke-width=".8"/><rect x="522.6" y="395.3" width="5.500" height="7" fill="none" stroke="#7e7e7e" stroke-width=".8"/><path d="M519.6 395.3H522.6M519.6 402.3H522.6M520.6 395.3V402.3" stroke="#7e7e7e" stroke-width=".8"/></svg>
</div>
</body></html>
